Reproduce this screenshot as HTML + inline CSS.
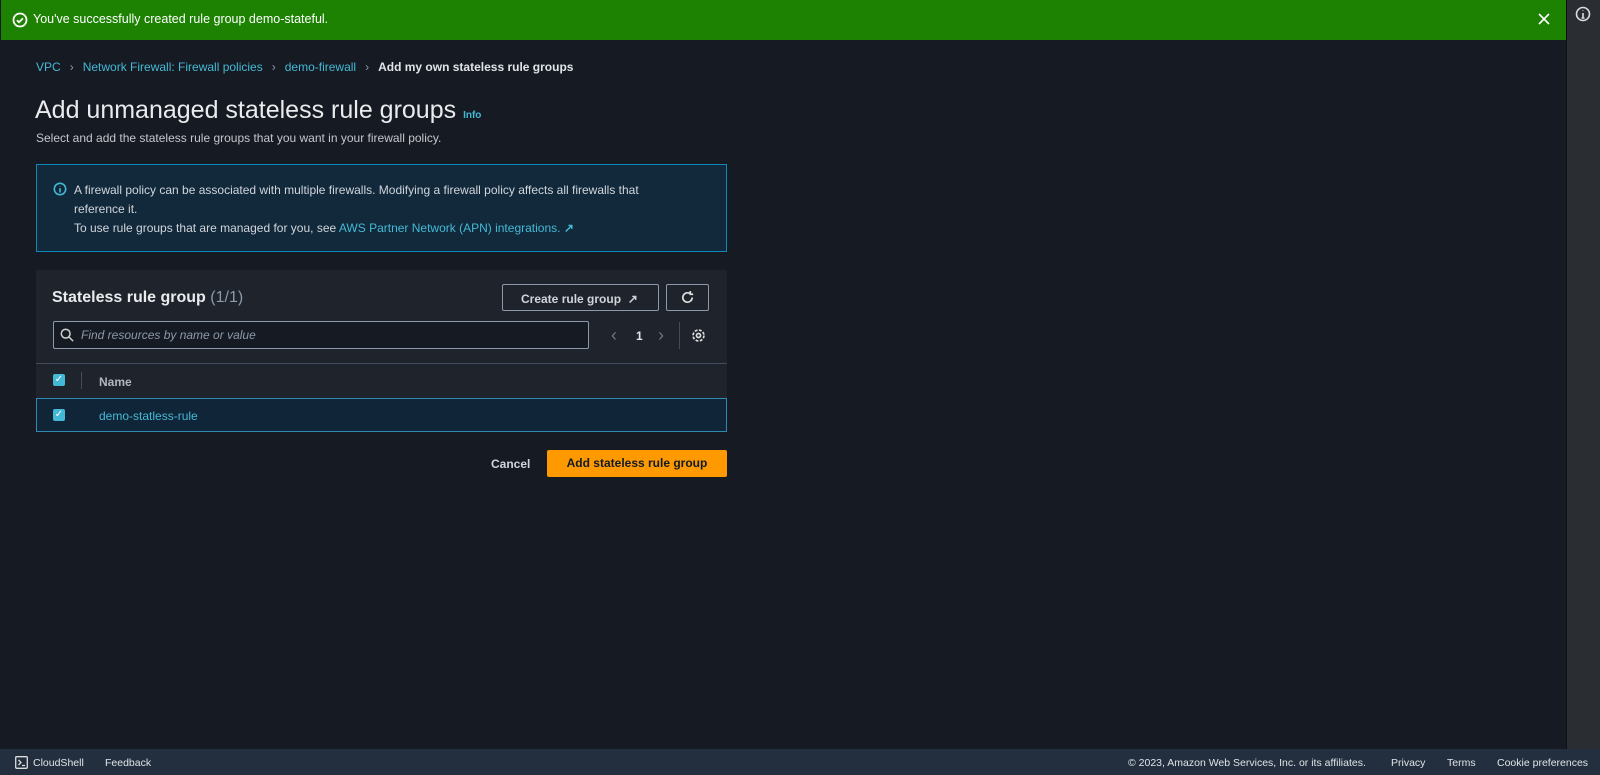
<!DOCTYPE html>
<html><head><meta charset="utf-8"><style>
*{box-sizing:border-box;margin:0;padding:0}
body{width:1600px;height:775px;overflow:hidden;background:#161a22;font-family:"Liberation Sans",sans-serif;color:#d1d5db;position:relative;font-size:13px}
.a{position:absolute}
.link{color:#44b9d6}
svg{display:block}
</style></head><body>
<div class="a" style="left:0;top:0;width:1566px;height:40px;background:#1d8102;border-left:1px solid #0f1b2a"></div>
<svg class="a" style="left:12px;top:12px" width="16" height="16" viewBox="0 0 16 16" fill="none" stroke="#fff" stroke-width="1.8"><circle cx="8" cy="8" r="6.5"/><path d="M5 8.2l2 2 4-4"/></svg>
<div class="a" style="left:33px;top:12px;color:#fff;font-size:12.5px">You've successfully created rule group demo-stateful.</div>
<svg class="a" style="left:1537px;top:12px" width="14" height="14" viewBox="0 0 14 14" stroke="#fff" stroke-width="1.6"><path d="M2 2l10 10M12 2L2 12"/></svg>
<div class="a" style="left:1566px;top:0;width:34px;height:749px;background:#2a2e33;border-left:1px solid #111"></div>
<svg class="a" style="left:1575px;top:6px" width="16" height="16" viewBox="0 0 16 16" fill="none" stroke="#ddd" stroke-width="1.6"><circle cx="8" cy="8" r="6.5"/><path d="M8 7v5M6.5 12h3M8 4.5v.5"/></svg>

<div class="a" style="left:36px;top:60px;font-size:12px;white-space:nowrap">
<span class="link">VPC</span><span style="color:#8d99a8;margin:0 9px">&#x203A;</span><span class="link">Network Firewall: Firewall policies</span><span style="color:#8d99a8;margin:0 9px">&#x203A;</span><span class="link">demo-firewall</span><span style="color:#8d99a8;margin:0 9px">&#x203A;</span><b style="color:#e0e4e8">Add my own stateless rule groups</b></div>
<div class="a" style="left:35px;top:96px;font-size:25px;color:#e9ebed;white-space:nowrap">Add unmanaged stateless rule groups <span class="link" style="font-size:10px;font-weight:bold">Info</span></div>
<div class="a" style="left:36px;top:131px;font-size:12px;color:#c6c6cd">Select and add the stateless rule groups that you want in your firewall policy.</div>

<div class="a" style="left:36px;top:164px;width:691px;height:88px;background:#12293b;border:1px solid #0c8ab8"></div>
<svg class="a" style="left:53px;top:182px" width="14" height="14" viewBox="0 0 16 16" fill="none" stroke="#44b9d6" stroke-width="1.8"><circle cx="8" cy="8" r="6.5"/><path d="M8 7v5M8 4.5v.5"/></svg>
<div class="a" style="left:74px;top:181px;font-size:12px;line-height:19px;color:#d1d5db;white-space:nowrap">A firewall policy can be associated with multiple firewalls. Modifying a firewall policy affects all firewalls that<br>reference it.<br>To use rule groups that are managed for you, see <span class="link">AWS Partner Network (APN) integrations.</span> <span class="link" style="font-weight:bold">&#x2197;</span></div>

<div class="a" style="left:36px;top:270px;width:691px;height:162px;background:#1f242c"></div>
<div class="a" style="left:52px;top:289px;font-size:16px;font-weight:bold;color:#e9ebed">Stateless rule group <span style="font-weight:normal;color:#8d99a8">(1/1)</span></div>
<div class="a" style="left:502px;top:284px;width:157px;height:27px;border:1px solid #8d99a8;border-radius:2px;font-weight:bold;color:#d1d5db;font-size:12px;padding:7px 0 0 18px">Create rule group &nbsp;&#x2197;</div>
<div class="a" style="left:666px;top:284px;width:43px;height:27px;border:1px solid #8d99a8;border-radius:2px"></div>
<svg class="a" style="left:680px;top:290px" width="15" height="15" viewBox="0 0 16 16" fill="none" stroke="#ddd" stroke-width="1.8"><path d="M13 8a5 5 0 1 1-2-4M11 1v3.5h3"/></svg>
<div class="a" style="left:53px;top:321px;width:536px;height:28px;border:1px solid #8d99a8;border-radius:2px;background:#161a22"></div>
<svg class="a" style="left:60px;top:328px" width="14" height="14" viewBox="0 0 16 16" fill="none" stroke="#ccc" stroke-width="1.8"><circle cx="6.5" cy="6.5" r="5"/><path d="M10 10l5 5"/></svg>
<div class="a" style="left:81px;top:328px;font-style:italic;color:#8d99a8;font-size:12px">Find resources by name or value</div>
<div class="a" style="left:611px;top:325px;color:#6b7480;font-size:18px">&#x2039;</div>
<div class="a" style="left:636px;top:329px;color:#e0e4e8;font-weight:bold;font-size:12px">1</div>
<div class="a" style="left:658px;top:325px;color:#6b7480;font-size:18px">&#x203A;</div>
<div class="a" style="left:679px;top:322px;width:1px;height:27px;background:#414d5c"></div>
<svg class="a" style="left:691px;top:328px" width="15" height="15" viewBox="0 0 16 16" fill="none" stroke="#ddd" stroke-width="1.8"><circle cx="8" cy="8" r="2.2"/><circle cx="8" cy="8" r="5.8" stroke-dasharray="3 1.6"/></svg>
<div class="a" style="left:36px;top:363px;width:691px;height:1px;background:#414d5c"></div>
<div class="a" style="left:53px;top:374px;width:12px;height:12px;background:#44b9d6;border-radius:2px;color:#fff;font-size:10px;text-align:center;line-height:12px">&#x2713;</div>
<div class="a" style="left:81px;top:372px;width:1px;height:17px;background:#414d5c"></div>
<div class="a" style="left:99px;top:375px;font-weight:bold;color:#b0b7c0;font-size:12px">Name</div>
<div class="a" style="left:36px;top:398px;width:691px;height:34px;background:#102538;border:1px solid #2e8ab0"></div>
<div class="a" style="left:53px;top:409px;width:12px;height:12px;background:#44b9d6;border-radius:2px;color:#fff;font-size:10px;text-align:center;line-height:12px">&#x2713;</div>
<div class="a" style="left:99px;top:409px;font-size:12px" ><span class="link">demo-statless-rule</span></div>

<div class="a" style="left:491px;top:457px;font-weight:bold;color:#d1d5db;font-size:12px">Cancel</div>
<div class="a" style="left:547px;top:450px;width:180px;height:27px;background:#ff9900;color:#0f1b2a;font-weight:bold;font-size:12px;text-align:center;line-height:27px;border-radius:2px">Add stateless rule group</div>

<div class="a" style="left:0;top:749px;width:1600px;height:26px;background:#232f3e;font-size:11px;color:#d5dbdb"></div>
<svg class="a" style="left:15px;top:756px" width="13" height="13" viewBox="0 0 13 13" fill="none" stroke="#ddd" stroke-width="1.3"><rect x=".7" y=".7" width="11.6" height="11.6" rx="1"/><path d="M3.5 4l2.5 2.5-2.5 2.5M7 9.5h3"/></svg>
<div class="a" style="left:33px;top:757px;font-size:10.5px;color:#e0e4e8">CloudShell</div>
<div class="a" style="left:105px;top:757px;font-size:10.5px;color:#e0e4e8">Feedback</div>
<div class="a" style="left:1128px;top:757px;font-size:10.5px;color:#e0e4e8;white-space:nowrap">© 2023, Amazon Web Services, Inc. or its affiliates.</div>
<div class="a" style="left:1391px;top:757px;font-size:10.5px;color:#e0e4e8">Privacy</div>
<div class="a" style="left:1447px;top:757px;font-size:10.5px;color:#e0e4e8">Terms</div>
<div class="a" style="left:1497px;top:757px;font-size:10.5px;color:#e0e4e8">Cookie preferences</div>
</body></html>
